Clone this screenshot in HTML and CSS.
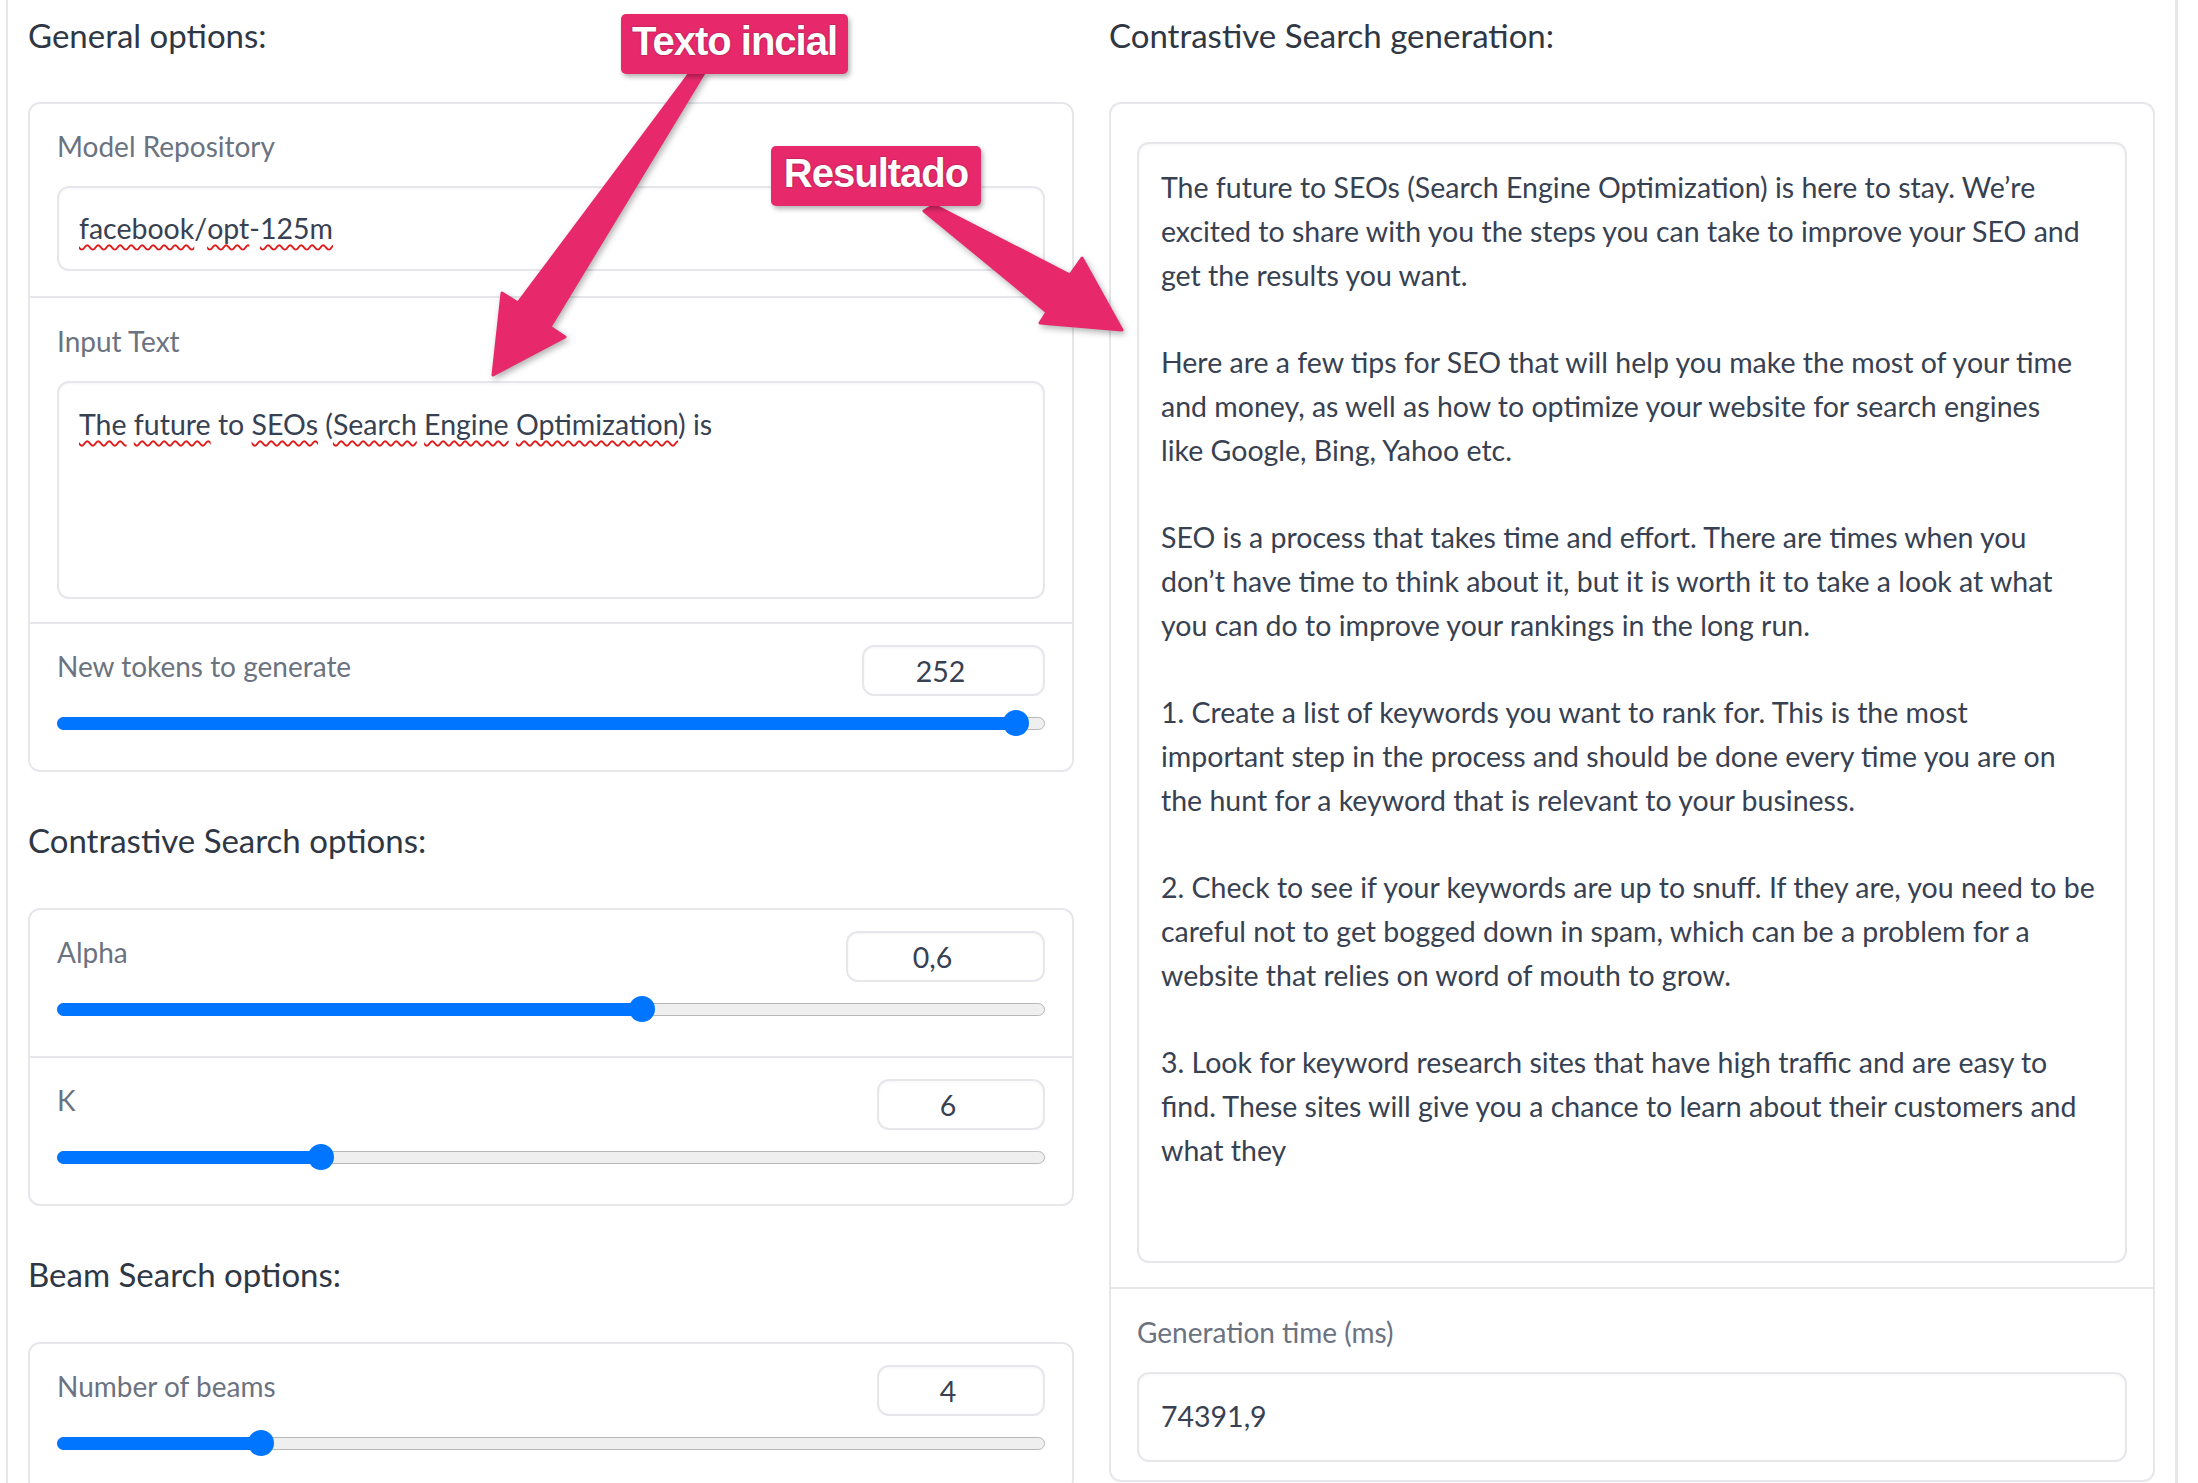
FILE: index.html
```html
<!DOCTYPE html>
<html lang="en">
<head>
<meta charset="utf-8">
<title>Contrastive Search</title>
<link rel="stylesheet" href="styles.css">
</head>
<body>
<div class="page">
  <div class="col">
    <h3 class="section-title first">General options:</h3>
    <div class="card">
      <div class="block block-text">
        <span class="label">Model Repository</span>
        <div class="input single"><span class="sp">facebook</span>/<span class="sp">opt</span>-<span class="sp">125m</span></div>
      </div>
      <div class="block block-area">
        <span class="label">Input Text</span>
        <div class="input area"><span class="sp">The</span> <span class="sp">future</span> to <span class="sp">SEOs</span> (<span class="sp">Search</span> <span class="sp">Engine</span> <span class="sp">Optimization</span>) is</div>
      </div>
      <div class="block block-slider">
        <div class="slider-head">
          <span class="label">New tokens to generate</span>
          <div class="num w183">252</div>
        </div>
        <div class="slider"><div class="track"><div class="fill" style="width:97.3%"><span class="thumb"></span></div></div></div>
      </div>
    </div>

    <h3 class="section-title">Contrastive Search options:</h3>
    <div class="card">
      <div class="block block-slider">
        <div class="slider-head">
          <span class="label">Alpha</span>
          <div class="num w199">0,6</div>
        </div>
        <div class="slider"><div class="track"><div class="fill" style="width:59.3%"><span class="thumb"></span></div></div></div>
      </div>
      <div class="block block-slider">
        <div class="slider-head">
          <span class="label">K</span>
          <div class="num w168">6</div>
        </div>
        <div class="slider"><div class="track"><div class="fill" style="width:26.8%"><span class="thumb"></span></div></div></div>
      </div>
    </div>

    <h3 class="section-title">Beam Search options:</h3>
    <div class="card">
      <div class="block block-slider">
        <div class="slider-head">
          <span class="label">Number of beams</span>
          <div class="num w168">4</div>
        </div>
        <div class="slider"><div class="track"><div class="fill" style="width:20.7%"><span class="thumb"></span></div></div></div>
      </div>
    </div>
  </div>

  <div class="col">
    <h3 class="section-title first">Contrastive Search generation:</h3>
    <div class="card">
      <div class="block block-output">
        <div class="input output">
          <p>The future to SEOs (Search Engine Optimization) is here to stay. We’re<br>excited to share with you the steps you can take to improve your SEO and<br>get the results you want.</p>
          <p>Here are a few tips for SEO that will help you make the most of your time<br>and money, as well as how to optimize your website for search engines<br>like Google, Bing, Yahoo etc.</p>
          <p>SEO is a process that takes time and effort. There are times when you<br>don’t have time to think about it, but it is worth it to take a look at what<br>you can do to improve your rankings in the long run.</p>
          <p>1. Create a list of keywords you want to rank for. This is the most<br>important step in the process and should be done every time you are on<br>the hunt for a keyword that is relevant to your business.</p>
          <p>2. Check to see if your keywords are up to snuff. If they are, you need to be<br>careful not to get bogged down in spam, which can be a problem for a<br>website that relies on word of mouth to grow.</p>
          <p>3. Look for keyword research sites that have high traffic and are easy to<br>find. These sites will give you a chance to learn about their customers and<br>what they</p>
        </div>
      </div>
      <div class="block block-time">
        <span class="label">Generation time (ms)</span>
        <div class="input single time">74391,9</div>
      </div>
    </div>
  </div>
</div>

<div class="annotations">
  <svg class="arrows" width="2198" height="1483" viewBox="0 0 2198 1483">
    <polygon points="690,73 704,73 550,327 565,337 493,375 502,293 518,303"/>
    <polygon points="934,205 1070,275 1082,258 1122,330 1040,323 1047,312 924,211"/>
  </svg>
  <div class="callout callout-input">Texto incial</div>
  <div class="callout callout-result">Resultado</div>
</div>
</body>
</html>
```

FILE: styles.css
```css
html, body {
  margin: 0;
  padding: 0;
  background: #ffffff;
  overflow: hidden;
  height: 1483px;
}

body {
  position: relative;
  font-family: Lato, "Noto Sans", sans-serif;
  color: #374151;
}

.page {
  margin-left: 6px;
  width: 2172px;
  min-height: 1483px;
  box-sizing: border-box;
  border-left: 2px solid #e7e7e9;
  border-right: 3px solid #e7e7e9;
  padding: 0 19px 0 20px;
  display: grid;
  grid-template-columns: 1046px 1046px;
  column-gap: 35px;
  align-items: start;
}

.section-title {
  margin: 44px 0;
  font-weight: 400;
  font-size: 33px;
  line-height: 48px;
  color: #2f3744;
}

.section-title.first {
  margin-top: 11px;
  margin-bottom: 43px;
}

.card {
  border: 2px solid #e5e7eb;
  border-radius: 12px;
  background: #ffffff;
}

.block + .block {
  border-top: 2px solid #e5e7eb;
}

.block-text {
  padding: 22px 27px 25px;
}

.block-area {
  padding: 23px 27px 23px;
}

.block-slider {
  padding: 21px 27px 34px;
}

.block-output {
  padding: 38px 26px 24px;
}

.block-time {
  padding: 23px 26px 18px;
}

.label {
  display: block;
  font-size: 28px;
  line-height: 40px;
  color: #6b7280;
  margin-bottom: 20px;
}

.input {
  box-sizing: border-box;
  border: 2px solid #e5e7eb;
  border-radius: 12px;
  background: #ffffff;
  box-shadow: inset 0 1px 3px rgba(0, 0, 0, 0.04);
  padding: 0 20px;
  font-size: 28.5px;
  line-height: 43.75px;
  color: #374151;
}

.input.single {
  height: 85px;
  display: flex;
  align-items: center;
}

.input.area {
  height: 218px;
  padding-top: 20px;
}

.input.output {
  height: 1121px;
  padding: 22px 22px;
}

.input.time {
  height: 90px;
  padding: 0 22px;
}

.output p {
  margin: 0 0 43.75px;
  white-space: nowrap;
}

.sp {
  text-decoration: underline wavy #e01b1b;
  text-decoration-thickness: 1.5px;
  text-underline-offset: 5px;
  text-decoration-skip-ink: none;
}

.slider-head {
  display: flex;
  justify-content: space-between;
  align-items: flex-start;
  height: 51px;
}

.slider-head .label {
  margin: 1px 0 0;
}

.num {
  box-sizing: border-box;
  height: 51px;
  border: 2px solid #e5e7eb;
  border-radius: 12px;
  box-shadow: inset 0 1px 3px rgba(0, 0, 0, 0.04);
  display: flex;
  align-items: center;
  justify-content: center;
  padding: 0 30px 0 4px;
  font-size: 28.5px;
  color: #374151;
}

.num.w183 { width: 183px; }
.num.w199 { width: 199px; }
.num.w168 { width: 168px; }

.slider {
  margin-top: 14px;
  height: 26px;
  display: flex;
  align-items: center;
}

.track {
  position: relative;
  flex: 1;
  height: 13px;
  box-sizing: border-box;
  border: 1px solid #b8b8b8;
  background: #efefef;
  border-radius: 7px;
}

.fill {
  position: absolute;
  left: -1px;
  top: -1px;
  bottom: -1px;
  background: #0075ff;
  border-radius: 7px;
}

.thumb {
  position: absolute;
  right: -13px;
  top: 50%;
  width: 26px;
  height: 26px;
  margin-top: -13px;
  border-radius: 50%;
  background: #0075ff;
}

.annotations {
  position: absolute;
  left: 0;
  top: 0;
  width: 2198px;
  height: 1483px;
  pointer-events: none;
}

.arrows {
  position: absolute;
  left: 0;
  top: 0;
  filter: drop-shadow(2px 3px 3px rgba(0, 0, 0, 0.3));
}

.arrows polygon {
  fill: #e7296b;
  stroke: #e7296b;
  stroke-width: 3;
  stroke-linejoin: round;
}

.callout {
  position: absolute;
  box-sizing: border-box;
  height: 60px;
  padding-bottom: 6px;
  background: #e7296b;
  color: #ffffff;
  font-family: "Liberation Sans", Arial, sans-serif;
  font-weight: 700;
  font-size: 40px;
  line-height: 54px;
  letter-spacing: -1px;
  text-align: center;
  border-radius: 5px;
  box-shadow: 2px 3px 5px rgba(0, 0, 0, 0.3);
  text-shadow: 0 0 2px rgba(0, 0, 0, 0.45);
}

.callout-input {
  left: 621px;
  top: 14px;
  width: 227px;
}

.callout-result {
  left: 771px;
  top: 146px;
  width: 210px;
}
```
